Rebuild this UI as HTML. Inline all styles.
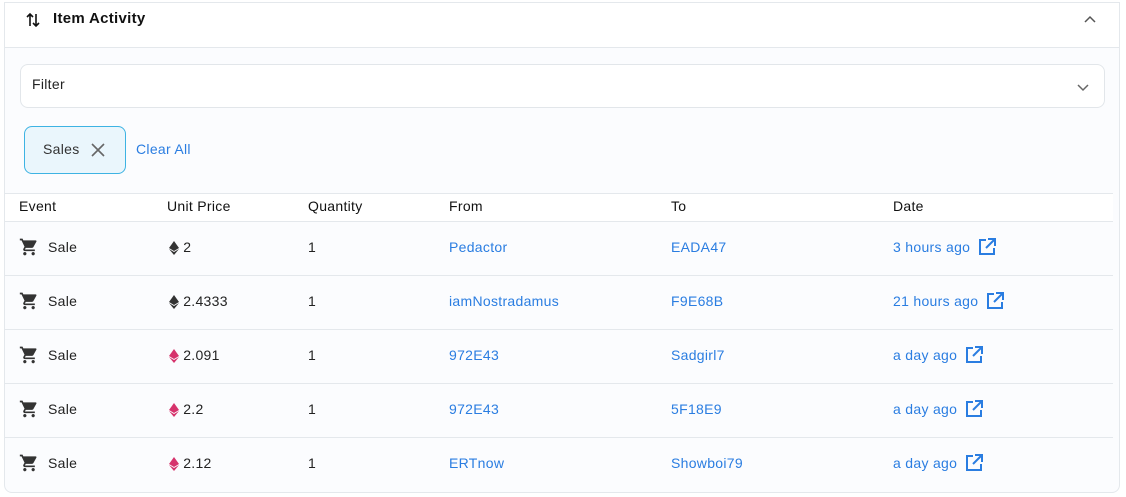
<!DOCTYPE html>
<html><head><style>
*{box-sizing:border-box;margin:0;padding:0}
body{width:1126px;height:497px;background:#fff;font-family:"Liberation Sans",sans-serif;font-size:14px;color:#222;position:relative;overflow:hidden;letter-spacing:0.3px}
.box{position:absolute;left:4px;top:2px;width:1116px;height:491px;border:1px solid #e4e8ec;border-radius:0 0 8px 8px;background:#fbfcfe;overflow:hidden}
.hd{position:absolute;left:0;top:0;width:100%;height:45px;background:#fff;border-bottom:1px solid #e4e8ec}
.title{position:absolute;left:48px;top:7px;font-weight:bold;font-size:15px;color:#111}
.filter{position:absolute;left:15px;top:61px;width:1085px;height:44px;border:1px solid #e2e6ea;border-radius:8px;background:#fff}
.filter span{position:absolute;left:11px;top:11px;font-size:14px}
.chip{position:absolute;left:19px;top:123px;width:102px;height:48px;border:1px solid #3db3e3;border-radius:8px;background:#eaf6fc}
.chip span{position:absolute;left:18px;top:14px;color:#333}
.clear{position:absolute;left:131px;top:138px;color:#2a7de1}
.t{position:absolute;left:0;top:190px;width:1108px}
.row{position:relative;height:54px;border-top:1px solid #e4e8ec}
.row.h{height:28px;background:#fff}
.c{position:absolute;top:17px;white-space:nowrap}
.f{top:11px;height:28px;display:flex;align-items:center}
.h .c{top:4px;color:#111}
a{color:#2a7de1;text-decoration:none}
svg{vertical-align:middle}
</style></head><body>
<div class="box">
<div class="hd">
<svg style="position:absolute;left:20px;top:8px" width="16" height="18" viewBox="0 0 16 18"><path d="M5 15V3M2 6l3-3 3 3M11 3v12M8 12l3 3 3-3" stroke="#111" stroke-width="1.6" fill="none"/></svg>
<div class="title">Item Activity</div>
<svg style="position:absolute;left:1078px;top:10px" width="14" height="14" viewBox="0 0 14 14"><path d="M2 9l5-5 5 5" stroke="#555" stroke-width="1.5" fill="none"/></svg>
</div>
<div class="filter"><span>Filter</span><svg style="position:absolute;left:1055px;top:15px" width="14" height="14" viewBox="0 0 14 14"><path d="M2 5l5 5 5-5" stroke="#666" stroke-width="1.5" fill="none"/></svg></div>
<div class="chip"><span>Sales</span><svg style="position:absolute;left:66px;top:16px" width="14" height="14" viewBox="0 0 14 14"><path d="M1 1l12 12M13 1L1 13" stroke="#666" stroke-width="1.6"/></svg></div>
<div class="clear">Clear All</div>
<div class="t">
<div class="row h"><div class="c" style="left:14px">Event</div><div class="c" style="left:162px">Unit Price</div><div class="c" style="left:303px">Quantity</div><div class="c" style="left:444px">From</div><div class="c" style="left:666px">To</div><div class="c" style="left:888px">Date</div></div>
<div class="row"><div class="c f" style="left:14px"><svg width="20" height="20" viewBox="0 0 24 24"><path fill="#333" d="M7 18c-1.1 0-2 .9-2 2s.9 2 2 2 2-.9 2-2-.9-2-2-2zM1 2v2h2l3.6 7.59-1.35 2.45c-.16.28-.25.61-.25.96 0 1.1.9 2 2 2h12v-2H7.42c-.14 0-.25-.11-.25-.25l.03-.12.9-1.63h7.45c.75 0 1.41-.41 1.75-1.03l3.58-6.49A1 1 0 0 0 20 4H5.21l-.94-2H1zm16 16c-1.1 0-2 .9-2 2s.9 2 2 2 2-.9 2-2-.9-2-2-2z"/></svg><span style="margin-left:9px">Sale</span></div>
<div class="c" style="left:164px"><svg width="10" height="14" viewBox="0 0 10 14"><path d="M5 0L0 7l5 3 5-3zM0 8l5 6 5-6-5 3z" fill="#333"/></svg> 2</div><div class="c" style="left:303px">1</div><div class="c" style="left:444px"><a>Pedactor</a></div><div class="c" style="left:666px"><a>EADA47</a></div><div class="c f" style="left:888px"><a>3 hours ago</a><svg style="margin-left:7px" width="20" height="20" viewBox="0 0 20 20"><path d="M9 3H3v14h14v-6M11 2h7v7M18 2l-9 9" stroke="#2a7de1" stroke-width="2" fill="none"/></svg></div></div>
<div class="row"><div class="c f" style="left:14px"><svg width="20" height="20" viewBox="0 0 24 24"><path fill="#333" d="M7 18c-1.1 0-2 .9-2 2s.9 2 2 2 2-.9 2-2-.9-2-2-2zM1 2v2h2l3.6 7.59-1.35 2.45c-.16.28-.25.61-.25.96 0 1.1.9 2 2 2h12v-2H7.42c-.14 0-.25-.11-.25-.25l.03-.12.9-1.63h7.45c.75 0 1.41-.41 1.75-1.03l3.58-6.49A1 1 0 0 0 20 4H5.21l-.94-2H1zm16 16c-1.1 0-2 .9-2 2s.9 2 2 2 2-.9 2-2-.9-2-2-2z"/></svg><span style="margin-left:9px">Sale</span></div>
<div class="c" style="left:164px"><svg width="10" height="14" viewBox="0 0 10 14"><path d="M5 0L0 7l5 3 5-3zM0 8l5 6 5-6-5 3z" fill="#333"/></svg> 2.4333</div><div class="c" style="left:303px">1</div><div class="c" style="left:444px"><a>iamNostradamus</a></div><div class="c" style="left:666px"><a>F9E68B</a></div><div class="c f" style="left:888px"><a>21 hours ago</a><svg style="margin-left:7px" width="20" height="20" viewBox="0 0 20 20"><path d="M9 3H3v14h14v-6M11 2h7v7M18 2l-9 9" stroke="#2a7de1" stroke-width="2" fill="none"/></svg></div></div>
<div class="row"><div class="c f" style="left:14px"><svg width="20" height="20" viewBox="0 0 24 24"><path fill="#333" d="M7 18c-1.1 0-2 .9-2 2s.9 2 2 2 2-.9 2-2-.9-2-2-2zM1 2v2h2l3.6 7.59-1.35 2.45c-.16.28-.25.61-.25.96 0 1.1.9 2 2 2h12v-2H7.42c-.14 0-.25-.11-.25-.25l.03-.12.9-1.63h7.45c.75 0 1.41-.41 1.75-1.03l3.58-6.49A1 1 0 0 0 20 4H5.21l-.94-2H1zm16 16c-1.1 0-2 .9-2 2s.9 2 2 2 2-.9 2-2-.9-2-2-2z"/></svg><span style="margin-left:9px">Sale</span></div>
<div class="c" style="left:164px"><svg width="10" height="14" viewBox="0 0 10 14"><path d="M5 0L0 7l5 3 5-3zM0 8l5 6 5-6-5 3z" fill="#d6336c"/></svg> 2.091</div><div class="c" style="left:303px">1</div><div class="c" style="left:444px"><a>972E43</a></div><div class="c" style="left:666px"><a>Sadgirl7</a></div><div class="c f" style="left:888px"><a>a day ago</a><svg style="margin-left:7px" width="20" height="20" viewBox="0 0 20 20"><path d="M9 3H3v14h14v-6M11 2h7v7M18 2l-9 9" stroke="#2a7de1" stroke-width="2" fill="none"/></svg></div></div>
<div class="row"><div class="c f" style="left:14px"><svg width="20" height="20" viewBox="0 0 24 24"><path fill="#333" d="M7 18c-1.1 0-2 .9-2 2s.9 2 2 2 2-.9 2-2-.9-2-2-2zM1 2v2h2l3.6 7.59-1.35 2.45c-.16.28-.25.61-.25.96 0 1.1.9 2 2 2h12v-2H7.42c-.14 0-.25-.11-.25-.25l.03-.12.9-1.63h7.45c.75 0 1.41-.41 1.75-1.03l3.58-6.49A1 1 0 0 0 20 4H5.21l-.94-2H1zm16 16c-1.1 0-2 .9-2 2s.9 2 2 2 2-.9 2-2-.9-2-2-2z"/></svg><span style="margin-left:9px">Sale</span></div>
<div class="c" style="left:164px"><svg width="10" height="14" viewBox="0 0 10 14"><path d="M5 0L0 7l5 3 5-3zM0 8l5 6 5-6-5 3z" fill="#d6336c"/></svg> 2.2</div><div class="c" style="left:303px">1</div><div class="c" style="left:444px"><a>972E43</a></div><div class="c" style="left:666px"><a>5F18E9</a></div><div class="c f" style="left:888px"><a>a day ago</a><svg style="margin-left:7px" width="20" height="20" viewBox="0 0 20 20"><path d="M9 3H3v14h14v-6M11 2h7v7M18 2l-9 9" stroke="#2a7de1" stroke-width="2" fill="none"/></svg></div></div>
<div class="row"><div class="c f" style="left:14px"><svg width="20" height="20" viewBox="0 0 24 24"><path fill="#333" d="M7 18c-1.1 0-2 .9-2 2s.9 2 2 2 2-.9 2-2-.9-2-2-2zM1 2v2h2l3.6 7.59-1.35 2.45c-.16.28-.25.61-.25.96 0 1.1.9 2 2 2h12v-2H7.42c-.14 0-.25-.11-.25-.25l.03-.12.9-1.63h7.45c.75 0 1.41-.41 1.75-1.03l3.58-6.49A1 1 0 0 0 20 4H5.21l-.94-2H1zm16 16c-1.1 0-2 .9-2 2s.9 2 2 2 2-.9 2-2-.9-2-2-2z"/></svg><span style="margin-left:9px">Sale</span></div>
<div class="c" style="left:164px"><svg width="10" height="14" viewBox="0 0 10 14"><path d="M5 0L0 7l5 3 5-3zM0 8l5 6 5-6-5 3z" fill="#d6336c"/></svg> 2.12</div><div class="c" style="left:303px">1</div><div class="c" style="left:444px"><a>ERTnow</a></div><div class="c" style="left:666px"><a>Showboi79</a></div><div class="c f" style="left:888px"><a>a day ago</a><svg style="margin-left:7px" width="20" height="20" viewBox="0 0 20 20"><path d="M9 3H3v14h14v-6M11 2h7v7M18 2l-9 9" stroke="#2a7de1" stroke-width="2" fill="none"/></svg></div></div>
</div>
</div>
</body></html>
